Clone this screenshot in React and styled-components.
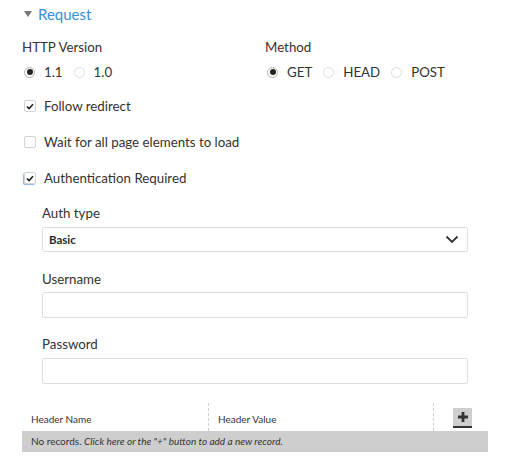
import React from "react";
import styled, { createGlobalStyle } from "styled-components";

const Global = createGlobalStyle`
  body {
    margin: 0;
    background: #ffffff;
    font-family: Lato, "Open Sans", "Liberation Sans", sans-serif;
    color: #333333;
  }
`;

const S = {
  Page: styled.div`
    width: 466px;
    padding: 0 29px 0 22px;
  `,
  SectionHeader: styled.div`
    display: flex;
    align-items: center;
    height: 28px;
    gap: 6px;
    color: #3a8fd6;
    font-size: 15px;
  `,
  Caret: styled.span`
    width: 0;
    height: 0;
    margin-left: 2px;
    border-left: 4px solid transparent;
    border-right: 4px solid transparent;
    border-top: 6px solid #777777;
  `,
  Columns: styled.div`
    display: grid;
    grid-template-columns: 243px 1fr;
    margin-top: 10px;
  `,
  Label: styled.div`
    height: 18px;
    line-height: 18px;
    font-size: 13.3px;
    color: #333333;
  `,
  RadioRow: styled.div`
    display: flex;
    align-items: center;
    height: 20px;
    margin-top: 6px;
    padding-left: 2px;
    gap: 11px;
  `,
  RadioOption: styled.label`
    display: flex;
    align-items: center;
    gap: 9px;
    font-size: 13.3px;
  `,
  Radio: styled.span`
    width: 11px;
    height: 11px;
    border-radius: 50%;
    border: 1px solid ${p => (p.$on ? "#b0b0b0" : "#dcdcdc")};
    box-sizing: border-box;
    display: flex;
    align-items: center;
    justify-content: center;
    &::after {
      content: "";
      width: 6px;
      height: 6px;
      border-radius: 50%;
      background: ${p => (p.$on ? "#222222" : "transparent")};
    }
  `,
  CheckRow: styled.label`
    display: flex;
    align-items: center;
    gap: 8px;
    height: 20px;
    margin-top: ${p => p.$top}px;
    padding-left: 2px;
    font-size: 13.3px;
  `,
  Box: styled.span`
    width: 12px;
    height: 12px;
    box-sizing: border-box;
    border: 1px solid #d4d4d4;
    border-radius: 2px;
    display: flex;
    align-items: center;
    justify-content: center;
    box-shadow: ${p => (p.$focus ? "-1px 1px 1px #8fb4dc" : "none")};
  `,
  Auth: styled.div`
    margin: 0 20px;
  `,
  FieldLabel: styled.div`
    height: 18px;
    line-height: 18px;
    font-size: 13.3px;
    margin-top: ${p => p.$top}px;
  `,
  Select: styled.div`
    display: flex;
    align-items: center;
    justify-content: space-between;
    height: 25px;
    margin-top: 5px;
    padding: 0 8px 0 6px;
    box-sizing: border-box;
    border: 1px solid #dedede;
    border-radius: 2px;
    font-size: 11.5px;
    font-weight: 700;
    color: #2a2a2a;
  `,
  Input: styled.div`
    height: 26px;
    margin-top: ${p => p.$top}px;
    box-sizing: border-box;
    border: 1px solid #dedede;
    border-radius: 2px;
  `,
  Table: styled.div`
    margin-top: 19px;
  `,
  HeadRow: styled.div`
    display: grid;
    grid-template-columns: 186px 225px 1fr;
    height: 28px;
  `,
  HeadCell: styled.div`
    display: flex;
    align-items: center;
    padding: 4px 0 0 9px;
    font-size: 10px;
    color: #333333;
    border-left: ${p => (p.$divider ? "1px dashed #cfcfcf" : "none")};
  `,
  PlusCell: styled.div`
    display: flex;
    align-items: flex-start;
    padding: 5px 0 0 19px;
    border-left: 1px dashed #cfcfcf;
  `,
  PlusButton: styled.div`
    width: 19px;
    height: 18px;
    background: #cfcfcf;
    border-bottom: 2px solid #333333;
    display: flex;
    align-items: center;
    justify-content: center;
  `,
  EmptyRow: styled.div`
    height: 21px;
    line-height: 21px;
    background: #cecece;
    padding-left: 9px;
    font-size: 10px;
    color: #333333;
    em {
      font-style: italic;
    }
  `
};

const Check = () => (
  <svg width="8" height="7" viewBox="0 0 8 7">
    <path d="M1 3.6 L3.1 5.6 L7 1.2" fill="none" stroke="#222" strokeWidth="1.6" />
  </svg>
);

const Chevron = () => (
  <svg width="14" height="9" viewBox="0 0 14 9">
    <path d="M1.5 1.5 L7 7 L12.5 1.5" fill="none" stroke="#333" strokeWidth="1.8" />
  </svg>
);

const Plus = () => (
  <svg width="10" height="10" viewBox="0 0 10 10">
    <path d="M3.6 0 H6.4 V3.6 H10 V6.4 H6.4 V10 H3.6 V6.4 H0 V3.6 H3.6 Z" fill="#333" />
  </svg>
);

const RadioGroup = ({ label, options, selected }) => (
  <div>
    <S.Label>{label}</S.Label>
    <S.RadioRow>
      {options.map(o => (
        <S.RadioOption key={o}>
          <S.Radio $on={o === selected} />
          {o}
        </S.RadioOption>
      ))}
    </S.RadioRow>
  </div>
);

export default function App() {
  return (
    <S.Page>
      <Global />
      <S.SectionHeader>
        <S.Caret />
        Request
      </S.SectionHeader>

      <S.Columns>
        <RadioGroup label="HTTP Version" options={["1.1", "1.0"]} selected="1.1" />
        <RadioGroup label="Method" options={["GET", "HEAD", "POST"]} selected="GET" />
      </S.Columns>

      <S.CheckRow $top={14}>
        <S.Box>
          <Check />
        </S.Box>
        Follow redirect
      </S.CheckRow>
      <S.CheckRow $top={16}>
        <S.Box />
        Wait for all page elements to load
      </S.CheckRow>
      <S.CheckRow $top={16}>
        <S.Box $focus>
          <Check />
        </S.Box>
        Authentication Required
      </S.CheckRow>

      <S.Auth>
        <S.FieldLabel $top={16}>Auth type</S.FieldLabel>
        <S.Select>
          Basic
          <Chevron />
        </S.Select>
        <S.FieldLabel $top={18}>Username</S.FieldLabel>
        <S.Input $top={4} />
        <S.FieldLabel $top={17}>Password</S.FieldLabel>
        <S.Input $top={5} />
      </S.Auth>

      <S.Table>
        <S.HeadRow>
          <S.HeadCell>Header Name</S.HeadCell>
          <S.HeadCell $divider>Header Value</S.HeadCell>
          <S.PlusCell>
            <S.PlusButton>
              <Plus />
            </S.PlusButton>
          </S.PlusCell>
        </S.HeadRow>
        <S.EmptyRow>
          No records. <em>Click here or the "+" button to add a new record.</em>
        </S.EmptyRow>
      </S.Table>
    </S.Page>
  );
}
